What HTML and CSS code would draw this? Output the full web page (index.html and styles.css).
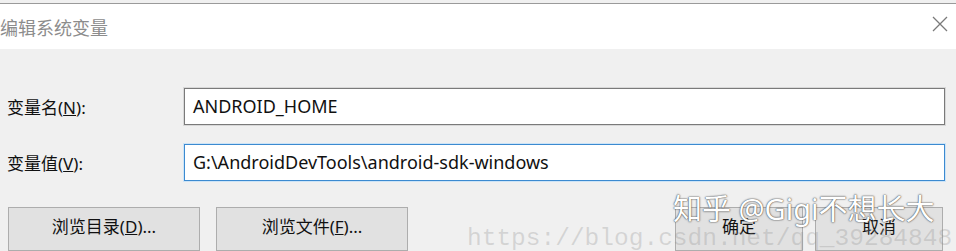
FILE: index.html
```html
<!DOCTYPE html>
<html lang="zh-CN">
<head>
    <meta charset="UTF-8">
    <title>编辑系统变量</title>
    <link rel="stylesheet" href="styles.css">
</head>
<body>
<div class="dialog">
    <div class="titlebar">
        <span class="title">编辑系统变量</span>
        <svg class="close" width="16" height="16" viewBox="0 0 16 16">
            <path d="M1 1 L15 15 M15 1 L1 15" stroke="#7a7a7a" stroke-width="1.3" fill="none"/>
        </svg>
    </div>
    <div class="content">
        <div class="field">
            <label class="label">变量名(<u>N</u>):</label>
            <div class="input">ANDROID_HOME</div>
        </div>
        <div class="field">
            <label class="label">变量值(<u>V</u>):</label>
            <div class="input active">G:\AndroidDevTools\android-sdk-windows</div>
        </div>
        <div class="buttons">
            <div class="btn">浏览目录(<u>D</u>)...</div>
            <div class="btn">浏览文件(<u>F</u>)...</div>
            <div class="spacer"></div>
            <div class="btn small">确定</div>
            <div class="btn small">取消</div>
        </div>
    </div>
    <div class="mark-zhihu">知乎 @Gigi不想长大</div>
    <div class="mark-csdn">https://blog.csdn.net/qq_39284848</div>
</div>
</body>
</html>
```

FILE: styles.css
```css
html, body {
    margin: 0;
    padding: 0;
    overflow: hidden;
}
body {
    font-family: "Noto Sans", "Noto Sans CJK SC", sans-serif;
    background: #f0f0f0;
}
.dialog {
    position: relative;
    width: 956px;
    height: 251px;
    overflow: hidden;
    background: #f0f0f0;
}
.titlebar {
    height: 45px;
    margin-top: 3px;
    border-top: 1px solid #9a9a9a;
    background: #fff;
    display: flex;
    align-items: center;
    justify-content: space-between;
    padding: 0 8px 0 0;
}
.title {
    font-size: 18px;
    color: #8c8c8c;
    margin-top: 0;
}
.close {
    margin-top: -5px;
}
.content {
    padding: 39px 11px 0 7px;
}
.field {
    display: flex;
    align-items: center;
    margin-bottom: 19px;
}
.field + .field {
    margin-bottom: 26px;
}
.label {
    width: 177px;
    font-size: 17px;
    color: #111;
}
.input {
    flex: 1;
    height: 37px;
    box-sizing: border-box;
    border: 1px solid #7a7a7a;
    background: #fff;
    font-size: 18px;
    color: #111;
    padding: 0 8px;
    line-height: 35px;
    box-shadow: 0 0 0 1px #d8d8d8;
}
.input.active {
    border-color: #3c8ad0;
    box-shadow: 0 0 0 1px #cde4f7;
}
.buttons {
    display: flex;
    gap: 16px;
    padding-left: 1px;
    margin-right: 2px;
}
.spacer {
    flex: 1;
}
.btn {
    width: 192px;
    height: 44px;
    box-sizing: border-box;
    border: 1px solid #adadad;
    background: #e1e1e1;
    font-size: 17px;
    color: #111;
    text-align: center;
    line-height: 38px;
}
.btn.small {
    width: 128px;
    margin-left: -4px;
}
.mark-zhihu {
    position: absolute;
    left: 673px;
    top: 186px;
    font-size: 29px;
    color: #fff;
    text-shadow: 0 0 2px #555, 0 0 1px #333;
}
.mark-csdn {
    position: absolute;
    left: 467px;
    top: 225px;
    font-family: "Liberation Mono", monospace;
    font-size: 24.5px;
    color: rgba(140, 140, 140, 0.28);
    white-space: nowrap;
}
```
